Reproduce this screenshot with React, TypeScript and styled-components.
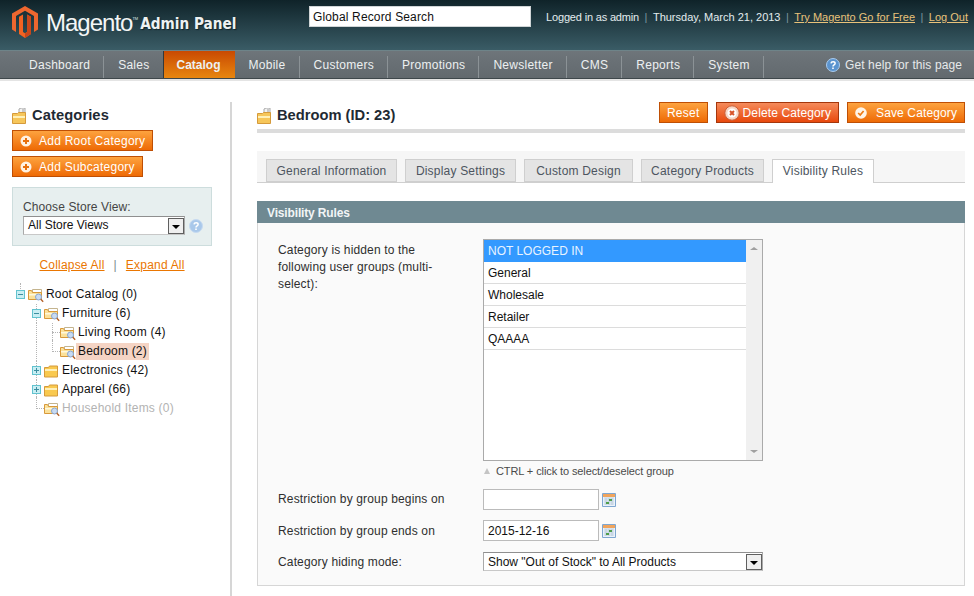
import React from 'react';
import styled, { createGlobalStyle } from 'styled-components';

const GlobalStyle = createGlobalStyle`
    html, body {
        margin: 0;
        padding: 0;
        background: #fff;
        overflow: hidden;
    }
    body {
        font-family: "Liberation Sans", Arial, sans-serif;
        font-size: 12px;
        color: #2f2f2f;
    }
`;

const Page = styled.div`
    width: 974px;
    height: 596px;
    overflow: hidden;
`;

/* header */

const Header = styled.header`
    height: 51px;
    box-sizing: border-box;
    display: flex;
    background: linear-gradient(to bottom, #0f2329, #3a5c66);
    border-bottom: 1px solid #6e8489;
`;

const Logo = styled.div`
    width: 309px;
    display: flex;
    align-items: flex-start;
    padding: 6px 0 0 12px;
    box-sizing: border-box;
`;

const LogoWord = styled.span`
    font-size: 24px;
    letter-spacing: -1px;
    color: #f4f6f6;
    margin-left: 8px;
    line-height: 34px;
`;

const LogoTm = styled.sup`
    font-size: 4px;
    line-height: 20px;
    color: #dfe6e6;
    align-self: flex-start;
    margin: 3px 0 0 0;
`;

const LogoSub = styled.span`
    font-family: "DejaVu Sans", sans-serif;
    font-stretch: condensed;
    font-weight: bold;
    font-size: 15.2px;
    color: #eef2f2;
    line-height: 36px;
    margin-left: 2px;
    text-shadow: 1px 1px 1px #10252b;
`;

const SearchBox = styled.div`
    width: 222px;
    height: 21px;
    margin-top: 6px;
    box-sizing: border-box;
    background: #fff;
    border: 1px solid #d0d5d6;
    padding: 3px 3px;
    font-size: 12px;
    letter-spacing: 0.15px;
    line-height: 14px;
    color: #111;
`;

const HeaderInfo = styled.div`
    flex: 1;
    display: flex;
    justify-content: flex-end;
    padding: 10px 6px 0 0;
    font-size: 11px;
    line-height: 14px;
    color: #e3ecee;
    white-space: nowrap;
`;

const LoggedIn = styled.span`
    letter-spacing: -0.17px;
`;

const Pipe = styled.span`
    color: #7d979e;
    margin: 0 5.5px;
`;

const HeaderLink = styled.span`
    color: #e8c27a;
    text-decoration: underline;
`;

/* nav */

const Nav = styled.nav`
    height: 28px;
    box-sizing: border-box;
    display: flex;
    align-items: stretch;
    padding-left: 15px;
    background: linear-gradient(to bottom, #6e757a, #62696e);
    border-bottom: 1px solid #3e474b;
`;

const NavItem = styled.div<{ $active?: boolean }>`
    display: flex;
    align-items: center;
    padding: 0 14px 0 ${p => (p.$active ? 13 : 14)}px;
    font-size: 12px;
    letter-spacing: ${p => (p.$active ? 0 : 0.27)}px;
    font-weight: ${p => (p.$active ? 'bold' : 'normal')};
    color: #edf0f1;
    position: relative;
    background: ${p => (p.$active ? 'linear-gradient(to bottom, #c94a02, #e8860f)' : 'none')};

    &::after {
        content: '';
        position: absolute;
        right: 0;
        top: 5px;
        bottom: 0;
        width: 1px;
        background: ${p => (p.$active ? 'transparent' : '#8b9296')};
    }

    &::before {
        content: '';
        position: absolute;
        left: -1px;
        top: 0;
        bottom: 0;
        width: 1px;
        background: ${p => (p.$active ? '#33393c' : 'transparent')};
        z-index: 1;
    }
`;

const NavHelp = styled.div`
    margin-left: auto;
    display: flex;
    align-items: center;
    gap: 5px;
    padding-right: 12px;
    font-size: 12px;
    letter-spacing: 0.1px;
    color: #e6e9ea;
`;

const SubLine = styled.div`
    height: 2px;
    background: #e4e4e4;
`;

/* body */

const Body = styled.div`
    display: flex;
    padding-top: 21px;
    height: 515px;
    box-sizing: border-box;
`;

const Sidebar = styled.aside`
    width: 232px;
    box-sizing: border-box;
    padding: 5px 18px 0 12px;
    border-right: 2px solid #d6d6d6;
    flex-shrink: 0;
`;

const SideTitle = styled.h3`
    margin: 0 0 6px;
    display: flex;
    align-items: center;
    gap: 4px;
    height: 17px;
    font-size: 14.7px;
    letter-spacing: 0.1px;
    line-height: 17px;
    font-weight: bold;
    color: #1f2a33;
`;

const SideButtons = styled.div`
    display: flex;
    flex-direction: column;
    align-items: flex-start;
    gap: 5px;
`;

const OrangeButton = styled.div<{ $red?: boolean; $gap?: number; $tight?: boolean }>`
    height: 21px;
    box-sizing: border-box;
    display: inline-flex;
    align-items: center;
    gap: ${p => p.$gap ?? 7}px;
    padding: 0 7px;
    font-size: 12px;
    font-weight: normal;
    letter-spacing: ${p => (p.$tight ? 0.12 : 0.25)}px;
    color: #fff;
    white-space: nowrap;
    border: 1px solid ${p => (p.$red ? '#a5360b' : '#bf4f04')};
    background: ${p =>
        p.$red
            ? 'linear-gradient(to bottom, #f58b5b, #e8480c)'
            : 'linear-gradient(to bottom, #fda33f, #ee6a05)'};
`;

const StoreBox = styled.div`
    margin-top: 10px;
    height: 59px;
    box-sizing: border-box;
    padding: 12px 8px 0 10px;
    background: #e7efef;
    border: 1px solid #cddddd;
    line-height: 15px;
    letter-spacing: 0.1px;
    color: #444;
`;

const StoreRow = styled.div`
    display: flex;
    align-items: center;
    gap: 4px;
    margin-top: 1px;
`;

const SelectBox = styled.div<{ $width: number }>`
    width: ${p => p.$width}px;
    height: 19px;
    flex-shrink: 0;
    box-sizing: border-box;
    display: flex;
    align-items: center;
    justify-content: space-between;
    padding-left: 4px;
    background: #fff;
    border: 1px solid #a9a9a9;
    border-top-color: #8f8f8f;
    border-bottom-color: #c8c8c8;
    letter-spacing: 0;
    color: #111;
    font-size: 12px;
`;

const SelectArrow = styled.div`
    width: 16px;
    height: 16px;
    box-sizing: border-box;
    display: flex;
    align-items: center;
    justify-content: center;
    background: #efefef;
    border: 1px solid #5f5f5f;

    &::after {
        content: '';
        margin-top: 2px;
        border-style: solid;
        border-width: 4px 4px 0;
        border-color: #000 transparent transparent;
    }
`;

const TreeLinks = styled.div`
    margin-top: 11px;
    height: 16px;
    text-align: center;
    line-height: 16px;
    letter-spacing: 0.2px;
    color: #7d8c8f;
`;

const LinkPipe = styled.span`
    margin: 0 9px;
`;

const OrangeLink = styled.span`
    color: #ea7601;
    text-decoration: underline;
`;

const Tree = styled.ul`
    list-style: none;
    margin: 12px 0 0;
    padding: 0 0 0 4px;
`;

const TreeRow = styled.li<{ $level: number }>`
    height: 19px;
    display: flex;
    align-items: center;
    position: relative;
    padding-left: ${p => p.$level * 16}px;
`;

const Rail = styled.span<{ $x: number; $half?: boolean }>`
    position: absolute;
    left: ${p => p.$x}px;
    top: ${p => (p.$half ? -2 : 0)}px;
    bottom: ${p => (p.$half ? 9 : 0)}px;
    border-left: 1px dotted #b5b5b5;
`;

const Elbow = styled.span<{ $x: number }>`
    position: absolute;
    left: ${p => p.$x}px;
    top: 9px;
    width: 8px;
    border-top: 1px dotted #b5b5b5;
`;

const Toggle = styled.span<{ $mode?: 'open' | 'closed' }>`
    width: 9px;
    height: 9px;
    margin: 0 3px 0 0;
    flex-shrink: 0;
    box-sizing: border-box;
    position: relative;
    background: #c9eef3;
    border: 1px solid ${p => (p.$mode ? '#62c3cf' : 'transparent')};
    visibility: ${p => (p.$mode ? 'visible' : 'hidden')};

    &::before {
        content: '';
        position: absolute;
        left: 1px;
        top: 3px;
        width: 5px;
        height: 1px;
        background: #3d8fa0;
    }

    &::after {
        content: '';
        position: absolute;
        left: 3px;
        top: 1px;
        width: 1px;
        height: 5px;
        background: ${p => (p.$mode === 'closed' ? '#3d8fa0' : 'transparent')};
    }
`;

const TreeLabel = styled.span<{ $selected?: boolean; $muted?: boolean }>`
    padding: 0 2px;
    line-height: 17px;
    font-size: 12px;
    letter-spacing: 0.2px;
    white-space: nowrap;
    color: ${p => (p.$muted ? '#b3b3b3' : '#111')};
    background: ${p => (p.$selected ? '#f5d4c4' : 'none')};
`;

/* main */

const Main = styled.main`
    width: 708px;
    margin-left: 25px;
    flex-shrink: 0;
`;

const ContentHead = styled.div`
    height: 31px;
    box-sizing: border-box;
    display: flex;
    align-items: flex-start;
    justify-content: space-between;
    border-bottom: 4px solid #dcdcdc;
`;

const ContentTitle = styled.h3`
    margin: 5px 0 0;
    display: flex;
    align-items: center;
    gap: 4px;
    font-size: 14.7px;
    letter-spacing: 0;
    line-height: 17px;
    font-weight: bold;
    color: #1f2a33;
`;

const Actions = styled.div`
    display: flex;
    gap: 8px;
`;

const TabStrip = styled.div`
    margin-top: 18px;
    height: 32px;
    box-sizing: border-box;
    display: flex;
    gap: 8px;
    padding: 8px 0 0 9px;
    background: #f6f6f6;
    border-bottom: 1px solid #cfcfcf;
`;

const Tab = styled.div<{ $active?: boolean; $width: number }>`
    width: ${p => p.$width}px;
    height: ${p => (p.$active ? 24 : 23)}px;
    box-sizing: border-box;
    text-align: center;
    line-height: 23px;
    font-size: 12px;
    letter-spacing: 0.2px;
    color: #4d5560;
    background: ${p => (p.$active ? '#fff' : '#e4e4e4')};
    border: 1px solid #cfcfcf;
    border-bottom: ${p => (p.$active ? 'none' : '1px solid #cfcfcf')};
`;

const Panel = styled.section`
    margin-top: 18px;
`;

const PanelHead = styled.div`
    height: 22px;
    box-sizing: border-box;
    padding-left: 10px;
    line-height: 24px;
    font-size: 12px;
    letter-spacing: -0.15px;
    font-weight: bold;
    color: #f2f5f6;
    background: #6f8992;
`;

const PanelBody = styled.div`
    height: 363px;
    box-sizing: border-box;
    padding: 16px 0 0 20px;
    background: #fafafa;
    border: 1px solid #d6d6d6;
    border-top: none;
`;

const FormRow = styled.div<{ $gap?: number }>`
    display: flex;
    align-items: center;
    margin-top: ${p => p.$gap ?? 0}px;
`;

const ListRow = styled(FormRow)`
    align-items: flex-start;
`;

const FieldLabel = styled.div<{ $top?: number }>`
    width: 205px;
    box-sizing: border-box;
    padding: ${p => p.$top ?? 0}px 30px 0 0;
    line-height: 17px;
    font-size: 12px;
    letter-spacing: 0.15px;
    color: #2f2f2f;
`;

const ListBox = styled.div`
    width: 280px;
    height: 222px;
    box-sizing: border-box;
    display: flex;
    border: 1px solid #aaa;
    background: #fff;
`;

const ListItems = styled.div`
    flex: 1;
`;

const ListItem = styled.div<{ $selected?: boolean }>`
    height: 22px;
    box-sizing: border-box;
    padding-left: 4px;
    line-height: 22px;
    font-size: 12px;
    color: ${p => (p.$selected ? '#e8f3ff' : '#111')};
    background: ${p => (p.$selected ? '#3399ff' : '#fff')};
    border-bottom: 1px solid ${p => (p.$selected ? '#3399ff' : '#dcdcdc')};
`;

const Scrollbar = styled.div`
    width: 16px;
    display: flex;
    flex-direction: column;
    justify-content: space-between;
    align-items: center;
    padding: 7px 0;
    box-sizing: border-box;
    background: #f0f0f0;
`;

const ScrollArrow = styled.span<{ $down?: boolean }>`
    border-style: solid;
    border-width: ${p => (p.$down ? '3px 4px 0' : '0 4px 3px')};
    border-color: ${p =>
        p.$down ? '#a0a0a0 transparent transparent' : 'transparent transparent #a0a0a0'};
`;

const Note = styled.div`
    margin: 2px 0 0 205px;
    height: 16px;
    line-height: 16px;
    font-size: 11px;
    letter-spacing: -0.1px;
    color: #4a4a4a;

    &::before {
        content: '';
        display: inline-block;
        border-style: solid;
        border-width: 0 3.5px 6px;
        border-color: transparent transparent #c4c4c4;
        margin: 0 6px 0 1px;
        vertical-align: 1px;
    }
`;

const TextInput = styled.div`
    width: 116px;
    height: 21px;
    box-sizing: border-box;
    padding: 0 4px;
    line-height: 20px;
    font-size: 12px;
    color: #111;
    background: #fff;
    border: 1px solid #bbb;
    margin-right: 3px;
`;

const FolderIcon: React.FC<{ lens?: boolean; plain?: boolean }> = ({ lens, plain }) => (
    <svg width="16" height="16" viewBox="0 0 16 16" style={{ flexShrink: 0 }}>
        {plain ? (
            <g>
                <path d="M.5 4.500h4l1-1.500h8v11H.5z" fill="#f9c94f" stroke="#d59a3b" />
                <path d="M1 6h12v2H1z" fill="#fff0b8" />
            </g>
        ) : (
            <g>
                <path d="M4.500 2.500h9v5h-9z" fill="#fff" stroke="#c4b48e" />
                <path d="M.5 3.500h3l1 2h9v7H.5z" fill="#fbe19a" stroke="#d8993a" />
                <path d="M1 7h12v1.500H1z" fill="#fff8dc" />
            </g>
        )}
        {lens && (
            <g>
                <circle cx="10.500" cy="10" r="3" fill="#c9dbf2" stroke="#8aa6cf" />
                <path d="M12.800 12.300l2.400 2.400" stroke="#b5622a" strokeWidth="1.400" />
            </g>
        )}
    </svg>
);

const TitleIcon: React.FC = () => (
    <svg width="16" height="16" viewBox="0 0 16 16" style={{ flexShrink: 0 }}>
        <path d="M7 5V1l2-1h4v9H7z" fill="#f2f2f2" stroke="#a9a9a9" />
        <path d="M10 1h2v5h-2z" fill="#c9c9c9" />
        <path d="M.5 5.500h5l1-1h7v11H.5z" fill="#f6c65a" stroke="#d59a3b" />
        <path d="M1 8h12v2H1z" fill="#fff0b8" />
    </svg>
);

const PlusIcon: React.FC = () => (
    <svg width="12" height="12" viewBox="0 0 12 12" style={{ flexShrink: 0 }}>
        <circle cx="6" cy="6" r="5.500" fill="#fff2e2" />
        <path d="M6 3v6M3 6h6" stroke="#e8700c" strokeWidth="2" />
    </svg>
);

const CrossIcon: React.FC = () => (
    <svg width="16" height="16" viewBox="0 0 16 16" style={{ flexShrink: 0 }}>
        <circle cx="8" cy="8" r="7.200" fill="#f7d5c4" stroke="#c9603a" />
        <circle cx="8" cy="8" r="4.600" fill="#fff" />
        <path d="M6 6l4 4M10 6l-4 4" stroke="#d8542a" strokeWidth="2" />
    </svg>
);

const CheckIcon: React.FC = () => (
    <svg width="12" height="12" viewBox="0 0 12 12" style={{ flexShrink: 0 }}>
        <circle cx="6" cy="6" r="5.800" fill="#fff4e6" />
        <path d="M3.200 6l2 2 3.400-4" fill="none" stroke="#ee7a12" strokeWidth="1.700" />
    </svg>
);

const HelpIcon: React.FC<{ size: number; pale?: boolean }> = ({ size, pale }) => (
    <svg width={size} height={size} viewBox="0 0 14 14" style={{ flexShrink: 0 }}>
        <circle cx="7" cy="7" r="6.500" fill={pale ? '#a9c8ea' : '#5b94cf'} stroke={pale ? '#c6daf0' : '#a9cbee'} />
        <path
            d="M5 5.400c.2-2.200 4.100-2.200 4.100 0 0 1.500-2.100 1.400-2.100 3"
            fill="none"
            stroke="#fff"
            strokeWidth="1.500"
        />
        <path d="M6.200 9.600h1.600v1.500H6.200z" fill="#fff" />
    </svg>
);

const CalendarIcon: React.FC = () => (
    <svg width="14" height="14" viewBox="0 0 14 14" style={{ flexShrink: 0 }}>
        <path d="M.5.5h13v13H.5z" fill="#eaf2fa" stroke="#7ea6d0" />
        <path d="M1 1h12v3H1z" fill="#f0a45c" />
        <path d="M2 5h10M2 7h10M2 9h10M2 11h10M4 5v7M7 5v7M10 5v7" stroke="#a9bcd0" strokeWidth=".6" />
        <path d="M7 6h3v2H7zM4 9h3v2H4z" fill="#4f9e4a" />
    </svg>
);

const MagentoLogo: React.FC = () => (
    <svg width="26" height="32" viewBox="0 0 26 32" style={{ flexShrink: 0 }}>
        <path d="M13 0L26 7.500v16L22 26V10L13 4.800 4 10v16L0 23.500V7.500z" fill="#ee672f" />
        <path d="M11 8.500l-4 2.300V28l6 4 6-4V10.800l-4-2.300V26l-2 1.200L11 26z" fill="#f26322" />
        <path d="M13 27.200V32l6-4V10.800l-4-2.300V26z" fill="#c8461a" />
    </svg>
);

const tabs = [
    { label: 'General Information', width: 131 },
    { label: 'Display Settings', width: 111 },
    { label: 'Custom Design', width: 109 },
    { label: 'Category Products', width: 123 },
    { label: 'Visibility Rules', width: 102, active: true },
];

const navItems = ['Dashboard', 'Sales', 'Catalog', 'Mobile', 'Customers', 'Promotions', 'Newsletter', 'CMS', 'Reports', 'System'];

type TreeNode = {
    label: string;
    level: number;
    toggle?: 'open' | 'closed';
    lens?: boolean;
    selected?: boolean;
    muted?: boolean;
    rails: { x: number; half?: boolean }[];
    elbow?: number;
};

const tree: TreeNode[] = [
    { label: 'Root Catalog (0)', level: 0, toggle: 'open', lens: true, rails: [{ x: 4, half: true }] },
    { label: 'Furniture (6)', level: 1, toggle: 'open', lens: true, rails: [{ x: 20 }] },
    { label: 'Living Room (4)', level: 2, lens: true, rails: [{ x: 20 }, { x: 36 }], elbow: 36 },
    { label: 'Bedroom (2)', level: 2, lens: true, selected: true, rails: [{ x: 20 }, { x: 36, half: true }], elbow: 36 },
    { label: 'Electronics (42)', level: 1, toggle: 'closed', rails: [{ x: 20 }] },
    { label: 'Apparel (66)', level: 1, toggle: 'closed', rails: [{ x: 20 }] },
    { label: 'Household Items (0)', level: 1, lens: true, muted: true, rails: [{ x: 20, half: true }], elbow: 20 },
];

const groups = ['NOT LOGGED IN', 'General', 'Wholesale', 'Retailer', 'QAAAA'];

const App: React.FC = () => (
    <Page>
        <GlobalStyle />
        <Header>
            <Logo>
                <MagentoLogo />
                <LogoWord>Magento</LogoWord>
                <LogoTm>TM</LogoTm>
                <LogoSub>Admin Panel</LogoSub>
            </Logo>
            <SearchBox>Global Record Search</SearchBox>
            <HeaderInfo>
                <LoggedIn>Logged in as admin</LoggedIn>
                <Pipe>|</Pipe>Thursday, March 21, 2013<Pipe>|</Pipe>
                <HeaderLink>Try Magento Go for Free</HeaderLink>
                <Pipe>|</Pipe>
                <HeaderLink>Log Out</HeaderLink>
            </HeaderInfo>
        </Header>
        <Nav>
            {navItems.map(item => (
                <NavItem key={item} $active={item === 'Catalog'}>
                    {item}
                </NavItem>
            ))}
            <NavHelp>
                <HelpIcon size={14} />
                Get help for this page
            </NavHelp>
        </Nav>
        <SubLine />
        <Body>
            <Sidebar>
                <SideTitle>
                    <TitleIcon />
                    Categories
                </SideTitle>
                <SideButtons>
                    <OrangeButton>
                        <PlusIcon />
                        Add Root Category
                    </OrangeButton>
                    <OrangeButton>
                        <PlusIcon />
                        Add Subcategory
                    </OrangeButton>
                </SideButtons>
                <StoreBox>
                    Choose Store View:
                    <StoreRow>
                        <SelectBox $width={162}>
                            All Store Views
                            <SelectArrow />
                        </SelectBox>
                        <HelpIcon size={14} pale />
                    </StoreRow>
                </StoreBox>
                <TreeLinks>
                    <OrangeLink>Collapse All</OrangeLink>
                    <LinkPipe>|</LinkPipe>
                    <OrangeLink>Expand All</OrangeLink>
                </TreeLinks>
                <Tree>
                    {tree.map(node => (
                        <TreeRow key={node.label} $level={node.level}>
                            {node.rails.map(rail => (
                                <Rail key={rail.x} $x={rail.x} $half={rail.half} />
                            ))}
                            {node.elbow !== undefined && <Elbow $x={node.elbow} />}
                            <Toggle $mode={node.toggle} />
                            <FolderIcon lens={node.lens} plain={!node.lens} />
                            <TreeLabel $selected={node.selected} $muted={node.muted}>
                                {node.label}
                            </TreeLabel>
                        </TreeRow>
                    ))}
                </Tree>
            </Sidebar>
            <Main>
                <ContentHead>
                    <ContentTitle>
                        <TitleIcon />
                        Bedroom (ID: 23)
                    </ContentTitle>
                    <Actions>
                        <OrangeButton>Reset</OrangeButton>
                        <OrangeButton $red $gap={3} $tight>
                            <CrossIcon />
                            Delete Category
                        </OrangeButton>
                        <OrangeButton $gap={9} $tight>
                            <CheckIcon />
                            Save Category
                        </OrangeButton>
                    </Actions>
                </ContentHead>
                <TabStrip>
                    {tabs.map(tab => (
                        <Tab key={tab.label} $width={tab.width} $active={tab.active}>
                            {tab.label}
                        </Tab>
                    ))}
                </TabStrip>
                <Panel>
                    <PanelHead>Visibility Rules</PanelHead>
                    <PanelBody>
                        <ListRow>
                            <FieldLabel $top={3}>Category is hidden to the following user groups (multi-select):</FieldLabel>
                            <ListBox>
                                <ListItems>
                                    {groups.map((group, i) => (
                                        <ListItem key={group} $selected={i === 0}>
                                            {group}
                                        </ListItem>
                                    ))}
                                </ListItems>
                                <Scrollbar>
                                    <ScrollArrow />
                                    <ScrollArrow $down />
                                </Scrollbar>
                            </ListBox>
                        </ListRow>
                        <Note>CTRL + click to select/deselect group</Note>
                        <FormRow $gap={10}>
                            <FieldLabel>Restriction by group begins on</FieldLabel>
                            <TextInput />
                            <CalendarIcon />
                        </FormRow>
                        <FormRow $gap={10}>
                            <FieldLabel $top={1}>Restriction by group ends on</FieldLabel>
                            <TextInput>2015-12-16</TextInput>
                            <CalendarIcon />
                        </FormRow>
                        <FormRow $gap={11}>
                            <FieldLabel $top={1}>Category hiding mode:</FieldLabel>
                            <SelectBox $width={280}>
                                Show "Out of Stock" to All Products
                                <SelectArrow />
                            </SelectBox>
                        </FormRow>
                    </PanelBody>
                </Panel>
            </Main>
        </Body>
    </Page>
);

export default App;
